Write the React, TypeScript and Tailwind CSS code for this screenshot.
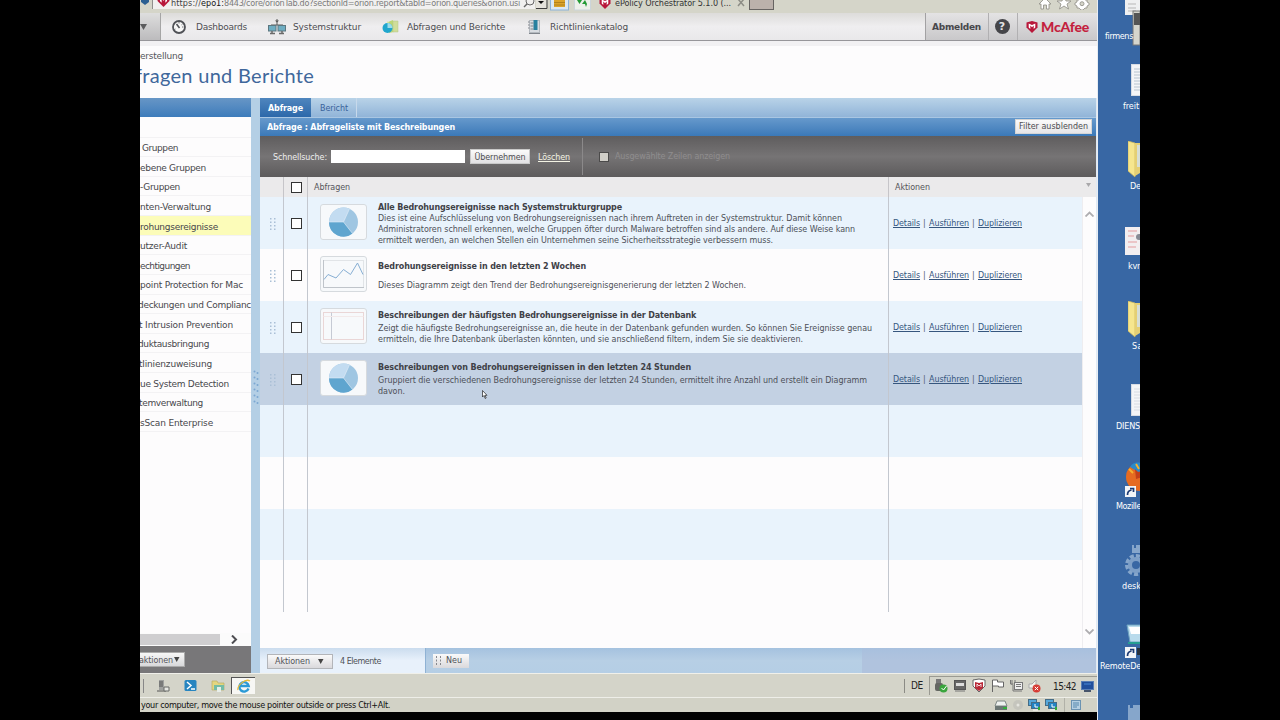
// App.tsx
import React, { useLayoutEffect, useRef, useState } from 'react';

interface FitProps {
    text: string;
    width: number;
    className?: string;
}

// Single line of text whose letter spacing is adjusted to fill a given width
const Fit: React.FC<FitProps> = ({ text, width, className = '' }) => {
    const ref = useRef<HTMLSpanElement>(null);
    const [spacing, setSpacing] = useState(0);

    useLayoutEffect(() => {
        if (ref.current) {
            const natural = ref.current.getBoundingClientRect().width;
            setSpacing((width - natural) / text.length);
        }
    }, []);

    return (
        <span ref={ref} className={`inline-block shrink-0 whitespace-pre ${className}`} style={{ letterSpacing: spacing }}>
            {text}
        </span>
    );
};

interface Query {
    icon: 'pie' | 'line' | 'table';
    title: [string, number];
    lines: [string, number][];
    gap: string;
    bg: string;
}

const queries: Query[] = [
    {
        icon: 'pie',
        title: ['Alle Bedrohungsereignisse nach Systemstrukturgruppe', 244],
        lines: [
            ['Dies ist eine Aufschlüsselung von Bedrohungsereignissen nach ihrem Auftreten in der Systemstruktur. Damit können', 464],
            ['Administratoren schnell erkennen, welche Gruppen öfter durch Malware betroffen sind als andere. Auf diese Weise kann', 477],
            ['ermittelt werden, an welchen Stellen ein Unternehmen seine Sicherheitsstrategie verbessern muss.', 395],
        ],
        gap: 'gap-0 pt-0.5',
        bg: 'bg-[#e9f3fc]',
    },
    {
        icon: 'line',
        title: ['Bedrohungsereignisse in den letzten 2 Wochen', 208],
        lines: [['Dieses Diagramm zeigt den Trend der Bedrohungsereignisgenerierung der letzten 2 Wochen.', 368]],
        gap: 'gap-2 pt-0.5',
        bg: 'bg-[#fdfcfd]',
    },
    {
        icon: 'table',
        title: ['Beschreibungen der häufigsten Bedrohungsereignisse in der Datenbank', 318],
        lines: [
            ['Zeigt die häufigste Bedrohungsereignisse an, die heute in der Datenbank gefunden wurden. So können Sie Ereignisse genau', 494],
            ['ermitteln, die Ihre Datenbank überlasten könnten, und sie anschließend filtern, indem Sie sie deaktivieren.', 425],
        ],
        gap: 'gap-0.5',
        bg: 'bg-[#e9f3fc]',
    },
    {
        icon: 'pie',
        title: ['Beschreibungen von Bedrohungsereignissen in den letzten 24 Stunden', 313],
        lines: [
            ['Gruppiert die verschiedenen Bedrohungsereignisse der letzten 24 Stunden, ermittelt ihre Anzahl und erstellt ein Diagramm', 489],
            ['davon.', 27],
        ],
        gap: 'gap-0.5',
        bg: 'bg-[#c3d1e3]',
    },
];

const groups: [string, number, string][] = [
    ['Gruppen', 38, 'pl-0.5'],
    ['ebene Gruppen', 66, ''],
    ['-Gruppen', 40, ''],
    ['nten-Verwaltung', 71, ''],
    ['rohungsereignisse', 78, ''],
    ['utzer-Audit', 47, ''],
    ['echtigungen', 50, ''],
    ['point Protection for Mac', 103, ''],
    ['deckungen und Complianc', 113, '-ml-0.5'],
    ['t Intrusion Prevention', 94, '-ml-px'],
    ['duktausbringung', 71, '-ml-0.5'],
    ['tlinienzuweisung', 73, '-ml-px'],
    ['ue System Detection', 89, ''],
    ['temverwaltung', 64, '-ml-px'],
    ['sScan Enterprise', 73, ''],
];

const Shield = ({ size }: { size: number }) => (
    <svg width={size} height={size} viewBox="0 0 12 12" className="shrink-0">
        <path d="M0.5 1.5L6 0l5.500 1.500V6.500L6 12 0.500 6.500z" fill="#b8173a" />
        <path d="M2.700 2.500v4l1.600 1.500V4.500L6 6.200l1.700-1.700V8l1.600-1.500v-4L6 4z" fill="#fff" />
    </svg>
);

const Thumb = ({ kind }: { kind: Query['icon'] }) => (
    <svg width="48" height="36" viewBox="0 0 48 36">
        <rect x="0.500" y="0.500" width="46" height="35" rx="2.500" fill="#f7f9fb" stroke="#d6dade" />
        {kind === 'pie' && (
            <g>
                <circle cx="23.500" cy="18" r="14.500" fill="#9fc6e2" />
                <path d="M23.500 18L9 18A14.500 14.500 0 0 1 29.500 4.800z" fill="#c3dcf1" />
                <path d="M23.500 18L9 18A14.500 14.500 0 0 0 32.500 29.500z" fill="#5fa5cf" />
                <path d="M23.500 18L29.500 4.800M23.500 18L32.500 29.500M23.500 18H9" stroke="#e4eff8" strokeWidth="0.600" />
            </g>
        )}
        {kind === 'line' && (
            <g fill="none">
                <rect x="3.500" y="4.500" width="40" height="27" stroke="#e1e4e7" />
                <path d="M3.500 4V31.500H44" stroke="#bfc4ca" />
                <path d="M4 23.500l4-5 8 3.500 7.500-8.500 7 5L37.500 7l5.500 11.500" stroke="#86aed3" />
            </g>
        )}
        {kind === 'table' && (
            <g fill="none">
                <rect x="3.500" y="4.500" width="40" height="27" stroke="#ead6d6" />
                <path d="M11.500 4.500v27" stroke="#c6cad4" />
                <path d="M3.500 8.500h40" stroke="#f3eaea" />
            </g>
        )}
    </svg>
);

const Grip = () => (
    <svg width="6" height="13" viewBox="0 0 6 13" fill="#aabfd6">
        {[0, 3.5, 7, 10.5].map((y) => (
            <g key={y}>
                <rect x="0" y={y} width="1.500" height="1.500" />
                <rect x="4" y={y} width="1.500" height="1.500" />
            </g>
        ))}
    </svg>
);

const Checkbox = () => <span className="block h-[11px] w-[11px] border border-[#333] bg-white"></span>;

const BrowserBar = () => (
    <div className="flex h-[13px] shrink-0 items-start overflow-hidden bg-[#d5d5c9] font-['DejaVu_Sans_Condensed','Noto_Sans',sans-serif]">
        <div className="flex h-[9px] w-[382px] shrink-0 items-start overflow-hidden bg-[#f1f0ef]">
            <svg width="13" height="9" viewBox="0 0 13 9" className="shrink-0">
                <rect width="13" height="9" fill="#d5d5c9" />
                <path d="M1 0h8v2L5 5 1 2z" fill="#2b5f91" />
                <path d="M13 0v9" stroke="#777" strokeWidth="1.500" />
            </svg>
            <div className="-mt-1.5 ml-1 flex shrink-0"><Shield size={13} /></div>
            <div className="-mt-1 ml-px flex text-[9px] leading-[14px] text-[#7b7b7b]">
                <Fit text="https://" width={30} className="text-[#444]" />
                <Fit text="epo1:" width={23} className="text-[#151515]" />
                <Fit text="8443/core/orionTab.do?sectionId=orion.report&tabId=orion.queries&orion.usi" width={296} />
            </div>
        </div>
        <svg width="77" height="13" viewBox="0 0 77 13" className="shrink-0">
            <rect width="13" height="9" fill="#f1f0ef" />
            <circle cx="8" cy="1" r="4" fill="none" stroke="#666" />
            <path d="M5 4L2 7" stroke="#666" strokeWidth="1.500" />
            <rect x="14" width="10" height="8" fill="#e5e3dc" />
            <path d="M14 8.500H25V0" fill="none" stroke="#3f3f3f" />
            <path d="M16 1h6l-3 3z" fill="#111" />
            <rect x="28.500" y="-2" width="18" height="12" fill="#dce8f3" stroke="#8bb3da" />
            <rect x="32" y="0" width="11" height="7" fill="#dba32b" />
            <path d="M32 2.500h11M32 5h11" fill="none" stroke="#b2821c" />
            <rect x="52.500" y="-2" width="16" height="12" fill="#eef0eb" stroke="#ccd5da" />
            <path d="M55 0h5l-2.500 4zM60 4l3-4 2 4-1 3-1-3z" fill="#249a35" />
        </svg>
        <div className="-mt-1 flex w-[134px] shrink-0 items-center">
            <Shield size={12} />
            <Fit text="ePolicy Orchestrator 5.1.0 (..." width={116} className="ml-[4px] text-[9px] leading-[14px] text-[#333]" />
        </div>
        <svg width="8" height="8" viewBox="0 0 8 8" className="ml-[4px] shrink-0">
            <path d="M1 -1l6 7M7 -1L1 6" stroke="#8d8d86" strokeWidth="1.500" />
        </svg>
        <div className="ml-[4px] h-[10px] w-[25px] shrink-0 border border-t-0 border-[#676462] bg-[#bbb1ab]"></div>
        <svg width="54" height="10" viewBox="0 0 54 10" className="ml-auto mr-[5px] shrink-0" fill="#fff" stroke="#8d8b84" strokeWidth="0.800">
            <path d="M1 4l6-6 6 6h-2v5H8.500V5h-3v4H3V4z" />
            <path d="M26-4l2 5h5l-4 3 1.500 5L26 6l-4.500 3L23 4l-4-3h5z" />
            <path d="M41 0l1-2h4l1 2 2 0 0 2 2 1v2l-2 1v2l-2 0-2 2h-2l-2-2-2 0V6l-2-1V3l2-1V0z" />
            <circle cx="44" cy="3.700" r="2" fill="#d5d5c9" />
        </svg>
    </div>
);

const NavBar = () => (
    <div className="flex h-[28px] shrink-0 items-center border-b border-[#97969a] bg-linear-to-b from-[#dddcda] via-[#efeef0] to-[#e9e8ea] text-[9px] text-[#4e4e52]">
        <div className="flex h-full w-[21px] shrink-0 items-center border-r border-[#a5a5a5] bg-linear-to-b from-[#dedede] to-[#bcbbbd]">
            <svg width="8" height="6" viewBox="0 0 8 6"><path d="M0 0h7L3.500 6z" fill="#5c5c5e" /></svg>
        </div>
        <svg width="16" height="16" viewBox="0 0 16 16" className="ml-[10px]" fill="none" stroke="#505257">
            <circle cx="8" cy="8" r="6" strokeWidth="1.800" fill="#f7f7f7" />
            <path d="M8.500 9L5.500 5" strokeWidth="1.500" />
            <path d="M8 3v1.500M12.500 8H11M4.500 10l-1 0.500M11.500 5l-1 0.800" strokeWidth="0.800" />
        </svg>
        <Fit text="Dashboards" width={51} className="ml-[9px] pt-[3px]" />
        <svg width="18" height="16" viewBox="0 0 18 16" className="ml-[21px]">
            <path d="M9 0v6M3 9V6h12v3" fill="none" stroke="#5a5a5a" />
            <path d="M7 1.500l2 2 2-2z" fill="#555" />
            <rect x="0.500" y="6.500" width="7.500" height="5.500" fill="#6eadc2" stroke="#5d7780" />
            <rect x="10" y="6.500" width="7.500" height="5.500" fill="#6eadc2" stroke="#5d7780" />
            <path d="M2 14.500h5M11 14.500h5M4 12v2M14 12v2" stroke="#6a6a6a" strokeWidth="1.500" />
        </svg>
        <Fit text="Systemstruktur" width={68} className="ml-[7px] pt-[3px]" />
        <svg width="17" height="15" viewBox="0 0 17 15" className="ml-[21px]">
            <path d="M6 3l5-2 1 12-5 1z" fill="#bcd676" />
            <path d="M11 2h5v11h-5z" fill="#d0dd9a" stroke="#b5c489" strokeWidth="0.500" />
            <path d="M5 2v5h5" fill="#dce8a5" />
            <circle cx="5.500" cy="9" r="5" fill="#20a6cd" />
            <path d="M5.500 9V4a5 5 0 0 1 5 5z" fill="#9ddbea" />
        </svg>
        <Fit text="Abfragen und Berichte" width={98} className="ml-[8px] pt-[3px]" />
        <svg width="14" height="16" viewBox="0 0 14 16" className="ml-[22px]">
            <rect x="2.500" y="1.500" width="10" height="12" fill="#d9dde2" stroke="#b4b9bf" />
            <rect x="6.500" y="1" width="4" height="10" fill="#28809f" />
            <path d="M3.500 4h3M3.500 7h3M3.500 10h3M1 3h1.500M1 6h1.500M1 9h1.500M2 14.500h11" stroke="#80858c" />
        </svg>
        <Fit text="Richtlinienkatalog" width={78} className="ml-[9px] pt-[3px]" />
        <div className="ml-auto flex h-full items-center bg-linear-to-b from-[#e4e3e4] to-[#c9c8ca]">
            <div className="flex h-full w-[63px] items-center border-l border-[#a2a1a3] pl-[6px]">
                <Fit text="Abmelden" width={49} className="pt-[3px] font-bold text-[#47474b]" />
            </div>
            <div className="flex h-full w-[29px] items-center justify-center border-l border-[#b1b0b2] pr-0.5">
                <div className="h-[15px] w-[15px] rounded-full bg-[#454549] text-center text-[11px] leading-[15px] font-bold text-[#e4e4e4]">?</div>
            </div>
            <div className="flex h-full w-[80px] items-center border-l border-[#b1b0b2] pl-[8px] font-['Lato',sans-serif] text-[14px] font-black text-[#c41f3e]">
                <Shield size={12} />
                <Fit text="McAfee" width={48} className="ml-[3px]" />
            </div>
        </div>
    </div>
);

const Sidebar = () => (
    <div className="flex w-[111px] shrink-0 flex-col overflow-hidden bg-[#fdfcfd]">
        <div className="h-[19px] shrink-0 bg-linear-to-b from-[#6796c6] to-[#3d7cbb]"></div>
        <div className="h-[20.500px] shrink-0 border-b border-[#f3f2f4]"></div>
        {groups.map(([label, width, offset]) => (
            <div
                key={label}
                className={`flex h-[19.640px] shrink-0 items-center border-b border-[#f3f2f4] pt-1 text-[9px] text-[#47474c] ${label === 'rohungsereignisse' ? 'bg-[#fcfcb9]' : ''}`}
            >
                <Fit text={label} width={width} className={offset} />
            </div>
        ))}
        <div className="mt-auto flex h-[13px] shrink-0 items-center bg-[#fbfbfb]">
            <div className="h-[11px] w-[80px] bg-[#cfced0]"></div>
            <svg width="9" height="9" viewBox="0 0 9 9" className="ml-[10px]" fill="none" stroke="#4e4e52" strokeWidth="2">
                <path d="M2 0.500l4 4-4 4" />
            </svg>
        </div>
        <div className="flex h-[27px] shrink-0 items-center bg-[#787779]">
            <div className="flex h-[15px] w-[45px] items-center border border-l-0 border-[#aaa] bg-linear-to-b from-[#f7f7f7] to-[#d8d8da] text-[8px] text-[#55555a]">
                <Fit text="aktionen" width={34} className="-ml-px pt-0.5" />
                <svg width="6" height="5" viewBox="0 0 6 5" className="ml-px"><path d="M0 0h5.500L2.700 5z" fill="#444" /></svg>
            </div>
        </div>
    </div>
);

const FilterBar = () => (
    <div className="flex h-[41px] shrink-0 items-center bg-linear-to-b from-[#5f5d5e] via-[#767475] to-[#5d5b5c] text-[8px] text-[#eeeeee]">
        <Fit text="Schnellsuche:" width={54} className="ml-[13px] pt-0.5" />
        <div className="ml-[4px] h-[13px] w-[134px] bg-white"></div>
        <div className="ml-[5px] flex h-[15px] w-[60px] items-center justify-center border border-[#c9c9c9] bg-linear-to-b from-[#fbfbfb] to-[#e2e1e3] text-[#4d4d51]">
            <Fit text="Übernehmen" width={51} className="pt-0.5" />
        </div>
        <Fit text="Löschen" width={32} className="ml-[8px] pt-0.5 text-[#f3f3e4] underline" />
        <div className="ml-[12px] h-[37px] w-px bg-[#8b898a]"></div>
        <div className="ml-[16px] h-[10px] w-[10px] border border-[#4b4a4a] bg-[#d0cec8]"></div>
        <Fit text="Ausgewählte Zeilen anzeigen" width={115} className="ml-[6px] text-[#8f8d8e]" />
    </div>
);

const Actions = () => (
    <div className="flex flex-1 items-center border-l border-[#c3c7cf] pl-[4px] pt-0.5 text-[8px] text-[#55606e]">
        <Fit text="Details" width={27} className="text-[#36567e] underline" />
        <Fit text="|" width={3} className="mx-[3px]" />
        <Fit text="Ausführen" width={40} className="text-[#36567e] underline" />
        <Fit text="|" width={3} className="mx-[3px]" />
        <Fit text="Duplizieren" width={44} className="text-[#36567e] underline" />
    </div>
);

const QueryTable = () => (
    <div className="flex min-h-0 flex-1 flex-col bg-[#fdfcfd]">
        <div className="flex h-[20px] shrink-0 bg-[#ebeaeb] text-[8px] text-[#55555a]">
            <div className="w-[23px]"></div>
            <div className="flex w-[24px] items-center border-l border-[#c6c5c9] pl-[7px]"><Checkbox /></div>
            <div className="flex w-[581px] items-center border-l border-[#c6c5c9] pl-[6px]"><Fit text="Abfragen" width={36} className="pt-0.5" /></div>
            <div className="flex flex-1 items-center justify-between border-l border-[#c6c5c9] pl-[6px] pr-[5px]">
                <Fit text="Aktionen" width={35} className="pt-0.5" />
                <svg width="5" height="4" viewBox="0 0 5 4" className="-mt-1"><path d="M0 0h5L2.500 4z" fill="#a9a8aa" /></svg>
            </div>
        </div>
        <div className="flex min-h-0 flex-1">
            <div className="w-[822px]">
                {queries.map((q) => (
                    <div key={q.title[0]} className={`flex h-[52px] ${q.bg}`}>
                        <div className="flex w-[23px] items-center justify-center pl-0.5 pt-0.5"><Grip /></div>
                        <div className="flex w-[24px] items-center border-l border-[#c3c7cf] pl-[7px]"><Checkbox /></div>
                        <div className="flex w-[581px] items-center border-l border-[#c3c7cf] pl-[12px]">
                            <div className="-mt-0.5"><Thumb kind={q.icon} /></div>
                            <div className={`ml-[10px] flex flex-col text-[8px] leading-[11px] text-[#4d5058] ${q.gap}`}>
                                <Fit text={q.title[0]} width={q.title[1]} className="self-start font-bold text-[#3f4147]" />
                                <div className="flex flex-col items-start">
                                    {q.lines.map(([text, width]) => <Fit key={text} text={text} width={width} />)}
                                </div>
                            </div>
                        </div>
                        <Actions />
                    </div>
                ))}
                {['bg-[#e9f3fc]', 'bg-[#fdfcfd]', 'bg-[#e9f3fc]', 'bg-[#fdfcfd]'].map((bg, i) => (
                    <div key={i} className={`flex h-[51.750px] ${bg}`}>
                        <div className="w-[23px]"></div>
                        <div className="w-[24px] border-l border-[#c3c7cf]"></div>
                        <div className="w-[582px] border-x border-[#c3c7cf]"></div>
                    </div>
                ))}
            </div>
            <div className="flex flex-1 flex-col items-center justify-between border-l border-[#eeedf0] pb-[13px] pt-[14px]">
                <svg width="9" height="6" viewBox="0 0 9 6" fill="none" stroke="#aeadb0" strokeWidth="1.800"><path d="M0.500 5.500l4-4 4 4" /></svg>
                <svg width="9" height="6" viewBox="0 0 9 6" fill="none" stroke="#aeadb0" strokeWidth="1.800"><path d="M0.500 0.500l4 4 4-4" /></svg>
            </div>
        </div>
    </div>
);

const MainPanel = () => (
    <div className="flex w-[836px] shrink-0 flex-col">
        <div className="flex h-[19px] shrink-0 bg-linear-to-b from-[#b9d3e8] to-[#91b4d8] text-[8px]">
            <div className="flex w-[51px] items-center bg-linear-to-b from-[#4f86be] to-[#2c68aa] pl-[8px] font-bold text-white"><Fit text="Abfrage" width={35} className="pt-0.5" /></div>
            <div className="flex w-[46px] items-center border-r border-[#c7d9eb] pl-[9px] text-[#3a629b]"><Fit text="Bericht" width={28} className="pt-0.5" /></div>
        </div>
        <div className="flex h-[19px] shrink-0 items-center justify-between border-t border-[#a9c6e2] bg-linear-to-b from-[#6699cc] to-[#3b79b8] pl-[7px] pr-[4px] text-[8px] text-white">
            <Fit text="Abfrage : Abfrageliste mit Beschreibungen" width={188} className="pt-px font-bold" />
            <div className="mb-0.5 flex h-[15px] w-[77px] items-center justify-center border border-[#d5d5d5] bg-linear-to-b from-[#fafafa] to-[#e6e5e7] text-[#4d4d51]">
                <Fit text="Filter ausblenden" width={69} className="pt-px" />
            </div>
        </div>
        <FilterBar />
        <QueryTable />
        <div className="flex h-[25px] shrink-0 items-center bg-linear-to-b from-[#a5c2df] via-[#b7cfe5] to-[#b5cee5] text-[8px] text-[#4f5258]">
            <div className="flex h-full w-[166px] items-center border-r border-[#8fb2d4] bg-linear-to-b from-[#cbdcee] via-[#e8f1fb] to-[#e8f1fb] pl-[7px] pt-px">
                <div className="flex h-[15px] w-[66px] items-center border border-[#b3b5b9] bg-linear-to-b from-[#fafafa] to-[#dad9dc] pl-[7px]">
                    <Fit text="Aktionen" width={35} className="pt-px" />
                    <svg width="6" height="5" viewBox="0 0 6 5" className="ml-[8px]"><path d="M0 0h5.500L2.700 5z" fill="#444" /></svg>
                </div>
                <Fit text="4 Elemente" width={41} className="ml-[7px] pt-px" />
            </div>
            <div className="ml-[7px] flex h-[14px] w-[36px] items-center bg-linear-to-b from-[#fafafa] to-[#dad9dc] pl-[3px]">
                <svg width="6" height="9" viewBox="0 0 6 9" fill="#85878d"><path d="M0 0h1v2H0zM4 0h1v2H4zM0 3.500h1v2H0zM4 3.500h1v2H4zM0 7h1v2H0zM4 7h1v2H4z" /></svg>
                <Fit text="Neu" width={16} className="ml-[4px] pt-px" />
            </div>
            <div className="ml-auto h-full w-[234px] bg-linear-to-b from-[#a8c0de] via-[#b0c3de] to-[#b0c3de]"></div>
        </div>
    </div>
);

const Taskbar = () => (
    <div className="flex h-[24px] shrink-0 items-center border-t border-[#f0f0ea] bg-[#d4d4c9] font-['DejaVu_Sans_Condensed','Noto_Sans',sans-serif] text-[10px] text-[#222]">
        <div className="ml-[3px] h-[14px] w-px bg-[#888]"></div>
        <svg width="14" height="14" viewBox="0 0 14 14" className="ml-[12px]">
            <path d="M3 1h5v10H3z" fill="#9fa19f" />
            <path d="M3 3h4M3 5h4M3 7h4M1 12h9" stroke="#555" />
            <path d="M8 8h5v4H8z" fill="#e6e7e2" stroke="#696b69" />
        </svg>
        <svg width="13" height="13" viewBox="0 0 13 13" className="ml-[14px]">
            <rect x="0.500" y="1" width="12" height="11" rx="1.500" fill="#2785c0" />
            <path d="M3 3l4 3.500L3 10M7 10h4" fill="none" stroke="#fff" strokeWidth="1.500" />
        </svg>
        <svg width="14" height="13" viewBox="0 0 14 13" className="ml-[14px]">
            <path d="M1 2h5l1 2h6v7H1z" fill="#e4d67f" stroke="#b7ad64" strokeWidth="0.700" />
            <path d="M3 6h10v5H3z" fill="#74bca6" />
            <rect x="6" y="8" width="4" height="5" fill="#e7eee9" />
        </svg>
        <div className="ml-[6px] flex h-[17px] w-[24px] items-center justify-center border-l border-t border-[#555] bg-[#f7f7f4]">
            <svg width="14" height="14" viewBox="0 0 14 14" fill="none">
                <path d="M11.500 9.500A4.700 4.700 0 1 1 11.700 7H3" stroke="#2b9ad6" strokeWidth="2.400" />
                <path d="M1 11C0 7 8-1 13 2" stroke="#e9bb38" strokeWidth="1.300" />
            </svg>
        </div>
        <div className="ml-auto h-[14px] w-px bg-[#8b8b85]"></div>
        <Fit text="DE" width={12} className="ml-[6px]" />
        <div className="ml-[6px] flex h-[19px] w-[168px] items-center border-l border-t border-[#9a9a92] pl-[4px]">
            <svg width="122" height="16" viewBox="0 0 122 16" className="shrink-0">
                <path d="M2 1h5v5H2z" fill="#777" /><rect x="1" y="5" width="8" height="8" rx="2" fill="#656763" />
                <circle cx="9.500" cy="10.500" r="4" fill="#3aa53d" /><path d="M7.500 10l2 2 3-4" fill="none" stroke="#fff" />
                <rect x="20.500" y="2.500" width="11" height="9" fill="#666" stroke="#555" /><path d="M22 5h8v3h-8z" fill="#ddd" /><path d="M21 13h10" stroke="#777" />
                <path d="M39 2l6-1 6 1v6l-6 6-6-6z" fill="#fff" stroke="#666" /><path d="M41 10V4l4 1 4-1v6l-4 3z" fill="#b92938" /><path d="M43 9V6l2 2 2-2v3" fill="none" stroke="#fff" strokeWidth="0.800" />
                <path d="M58.500 14V2h5v2h6v5h-5V8h-6" fill="#fff" stroke="#666" />
                <rect x="80.500" y="4.500" width="8" height="7" fill="#eee" stroke="#777" /><path d="M82 6.500h5M82 8.500h5M78 2v5M81 2v2M79 7v6h9M76.500 2v4h3" fill="none" stroke="#777" />
                <path d="M95 6h3l4-4v12l-4-4h-3z" fill="#f3f3ed" stroke="#aaa" /><circle cx="102.500" cy="10.500" r="4" fill="#d63b34" /><path d="M100.800 8.800l3.400 3.400M104.200 8.800l-3.400 3.400" stroke="#fff" />
            </svg>
            <Fit text="15:42" width={23} className="-ml-[3px]" />
            <svg width="13" height="11" viewBox="0 0 13 11" className="ml-[5px] shrink-0">
                <rect x="0.500" y="0.500" width="12" height="8" fill="#214f9c" stroke="#5a7fb5" /><path d="M3 3h7" stroke="#4a8ad6" /><path d="M3 10h7" stroke="#47556b" strokeWidth="2" />
            </svg>
        </div>
    </div>
);

const StatusBar = () => (
    <div className="flex h-[15px] shrink-0 items-center justify-between border-t border-[#eeeee8] bg-[#d2d2c6] font-['DejaVu_Sans_Condensed','Noto_Sans',sans-serif] text-[9px] text-[#111]">
        <Fit text="your computer, move the mouse pointer outside or press Ctrl+Alt." width={250} className="pl-px pt-px" />
        <svg width="89" height="14" viewBox="0 0 89 14" className="mr-[14px]">
            <path d="M3 3h8l2 5H1z" fill="#eef1ef" stroke="#7e8885" /><rect x="1" y="8" width="12" height="4" fill="#6b7674" /><path d="M9 10h4" stroke="#31ae3a" strokeWidth="2" />
            <circle cx="24" cy="7" r="5" fill="#c5c5bd" /><circle cx="24" cy="7" r="1.500" fill="#e5e5df" />
            {[34, 51].map((x) => (
                <g key={x} transform={`translate(${x} 0)`}>
                    <rect x="0.500" y="1.500" width="8" height="6" fill="#55a7da" stroke="#456c86" />
                    <rect x="3.500" y="4.500" width="8" height="6" fill="#2183c4" stroke="#456c86" />
                    <path d="M7 6v3h3M5 12h5" fill="none" stroke="#fff" /><path d="M11 9v3" stroke="#31ae3a" strokeWidth="2" />
                </g>
            ))}
            <path d="M70.500 0v14" stroke="#b1b1a8" />
            <rect x="77.500" y="2.500" width="9" height="9" fill="#b4cfe2" stroke="#6b93b2" /><path d="M79 5h6M79 7h6M79 9h4" stroke="#5688ad" />
        </svg>
    </div>
);

const Page = ({ lines = '#b8c4cf' }: { lines?: string }) => (
    <g>
        <rect x="0.500" y="0.500" width="20" height="31" fill="#f4f5f7" stroke="#d8dde5" />
        <path d="M3 5h15M3 8h15M3 11h15M3 14h15M3 17h15M3 20h15M3 23h15M3 26h15" stroke={lines} />
    </g>
);

const Folder = () => (
    <g>
        <path d="M0 0l7 2v34L0 30z" fill="#f6e68e" stroke="#cdb65a" strokeWidth="0.700" />
        <path d="M7 2h8v28l-8 5z" fill="#e4cf74" />
        <path d="M9 4h6v22H9z" fill="#d7ded4" />
    </g>
);

const Shortcut = () => (
    <g>
        <rect width="11" height="11" fill="#f2f5f8" />
        <path d="M2.500 9c0-3 1-4.500 4-5M5 2.500h3.500V6" fill="none" stroke="#1d3b73" strokeWidth="1.700" />
    </g>
);

const desktopItems: { name: string; x: number; y: number; width: number; ix: number; iy: number; art: React.ReactNode }[] = [
    {
        name: 'firmens', x: 7, y: 29, width: 28, ix: 27, iy: 0,
        art: (
            <g>
                <rect width="15" height="15" fill="#eff0f1" /><path d="M3 4h8M3 8h8M3 11h8" stroke="#b7b7b7" />
                <rect x="8" y="11" width="7" height="34" fill="#d5d5cd" stroke="#777" /><rect x="9" y="13" width="6" height="12" fill="#555" />
            </g>
        ),
    },
    { name: 'freit', x: 25, y: 99, width: 16, ix: 33, iy: 64, art: <Page /> },
    { name: 'De', x: 32, y: 179, width: 11, ix: 30, iy: 141, art: <Folder /> },
    {
        name: 'kvr', x: 30, y: 259, width: 12, ix: 27, iy: 227,
        art: (
            <g>
                <rect width="15" height="28" fill="#f2eef0" /><path d="M3 4h9M3 9h6M3 15h9M3 20h8" stroke="#e49b9e" /><circle cx="14" cy="10" r="3" fill="#878b95" />
            </g>
        ),
    },
    { name: 'Sa', x: 34, y: 339, width: 11, ix: 30, iy: 301, art: <Folder /> },
    { name: 'DIENS', x: 18, y: 419, width: 24, ix: 33, iy: 384, art: <Page lines="#d8dce3" /> },
    {
        name: 'Mozille', x: 18, y: 499, width: 25, ix: 27, iy: 461,
        art: (
            <g>
                <circle cx="15" cy="16" r="14" fill="#e66b22" /><path d="M5 6C8 1 12 1 16 2v11z" fill="#298acb" /><path d="M10 8l3 3 4-1v6l-6 2z" fill="#c33f19" /><path d="M4 8l4 4M11 3l3 5" stroke="#f5b12e" strokeWidth="2" />
                <g transform="translate(0 25)"><Shortcut /></g>
            </g>
        ),
    },
    {
        name: 'desk', x: 24, y: 579, width: 19, ix: 27, iy: 545,
        art: (
            <g>
                <path d="M7 0h2v3h2V0h4v8H7z" fill="#86a6cb" /><circle cx="11" cy="20" r="9" fill="none" stroke="#86a6cb" strokeWidth="4" strokeDasharray="4 2" /><circle cx="11" cy="20" r="6" fill="none" stroke="#7d9fc7" strokeWidth="4" />
            </g>
        ),
    },
    {
        name: 'RemoteDe', x: 2, y: 659, width: 41, ix: 27, iy: 624,
        art: (
            <g>
                <path d="M2 1h14v17H5z" fill="#b9dbec" stroke="#6da3c0" /><path d="M4 3h12v7H6z" fill="#fff" /><path d="M3 19h12" stroke="#249e91" strokeWidth="2" />
                <g transform="translate(0 23)"><Shortcut /></g><rect x="12" y="24" width="3" height="7" fill="#26313d" />
            </g>
        ),
    },
    {
        name: '', x: 0, y: 700, width: 0, ix: 30, iy: 705,
        art: <path d="M0 0h2v3h3V0h7v15H0z" fill="#86a6cb" />,
    },
];

const Desktop = () => (
    <div className="relative w-[42px] shrink-0 overflow-hidden bg-[#3867a4] font-['DejaVu_Sans_Condensed','Noto_Sans',sans-serif] text-[9px] leading-[14px] text-white">
        {desktopItems.map((item) => (
            <React.Fragment key={item.y}>
                <svg width="15" height="46" viewBox="0 0 15 46" className="absolute" style={{ left: item.ix, top: item.iy }}>{item.art}</svg>
                {item.name && (
                    <div className="absolute" style={{ left: item.x, top: item.y }}><Fit text={item.name} width={item.width} /></div>
                )}
            </React.Fragment>
        ))}
    </div>
);

const App: React.FC = () => {
    return (
        <div className="relative flex h-[720px] w-[1280px] overflow-hidden bg-black px-[140px] font-['DejaVu_Sans',sans-serif]">
            <div className="flex h-[712px] w-[957px] shrink-0 flex-col overflow-hidden">
                <BrowserBar />
                <NavBar />
                <div className="h-[57px] shrink-0 overflow-hidden border-t-[5px] border-[#f2f1f3] bg-[#fdfcfd]">
                    <div className="pt-1 text-[9px] leading-[12px] text-[#55565b]"><Fit text="erstellung" width={43} /></div>
                    <div className="-ml-[5px] font-['Lato',sans-serif] text-[20px] leading-[26px] text-[#3f679b]"><Fit text="fragen und Berichte" width={179} /></div>
                </div>
                <div className="flex h-[575px] shrink-0 overflow-hidden">
                    <Sidebar />
                    <div className="flex w-[9px] shrink-0 flex-col items-center bg-[#b4cfe5] pt-[272px]">
                        <svg width="6" height="34" viewBox="0 0 6 34" fill="#7ba8d2">
                            {[0, 6, 12, 18, 24, 30].map((y) => (
                                <g key={y}><circle cx="1.500" cy={y + 1.5} r="1" /><circle cx="4.500" cy={y + 3} r="1" /></g>
                            ))}
                        </svg>
                    </div>
                    <MainPanel />
                    <div className="w-px bg-[#dfe9f4]"></div>
                </div>
                <Taskbar />
                <StatusBar />
            </div>
            <div className="w-px shrink-0 bg-[#e8edf3]"></div>
            <Desktop />
            <svg width="6" height="9" viewBox="0 0 6 9" className="absolute left-[482px] top-[390px]">
                <path d="M0.500 0.500v6.500l1.500-1.500 1.200 3 1-0.500-1.200-2.700h2z" fill="#fff" stroke="#222" strokeWidth="0.700" />
            </svg>
        </div>
    );
};

export default App;
